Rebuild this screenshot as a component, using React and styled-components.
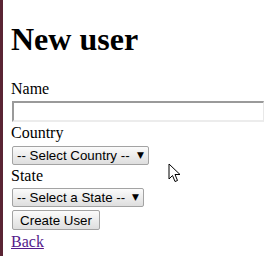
import React from "react";
import styled, { createGlobalStyle } from "styled-components";

const GlobalStyle = createGlobalStyle`
  html {
    height: 100%;
    box-sizing: border-box;
    border-left: 3px solid #5a2434;
    background: #fff;
  }
  body {
    margin: 0 8px 8px;
    font-family: "Liberation Serif", "Times New Roman", serif;
    font-size: 16px;
    color: #000;
  }
`;

const Page = styled.div`
  padding-top: 21.44px;
`;

const Title = styled.h1`
  font-size: 32px;
  font-weight: bold;
  margin: 0 0 21.44px;
`;

const Label = styled.label`
  display: block;
  line-height: 18.4px;
`;

const TextInput = styled.input`
  display: block;
  box-sizing: border-box;
  width: 252px;
  height: 21px;
  margin: 3px 0 2px 1px;
  padding: 1px 2px;
  border-style: solid;
  border-width: 2px 1px 2px 2px;
  border-color: #9a9a9a #e8e8e8 #ececec #9a9a9a;
  background: #fff;
  font: 13.33px "Liberation Sans", Arial, sans-serif;
  outline: none;
`;

const SelectWrap = styled.div`
  position: relative;
  width: ${(p) => p.$width}px;
  margin: 3px 0 2px 1px;
`;

const Select = styled.select`
  appearance: none;
  display: block;
  box-sizing: border-box;
  width: 100%;
  height: 19px;
  padding: 0 12px 0 4px;
  border: 1px solid #a3a3a3;
  border-radius: 2px;
  background: linear-gradient(#fbfbfb, #dedede);
  font: 13.33px "Liberation Sans", Arial, sans-serif;
  color: #000;
  line-height: 17px;
`;

const Arrow = styled.span`
  position: absolute;
  right: 5px;
  top: 4px;
  font: 9px "DejaVu Sans", sans-serif;
  line-height: 10px;
  pointer-events: none;
`;

const Button = styled.button`
  display: block;
  box-sizing: border-box;
  width: 88px;
  height: 20px;
  margin: 3px 0 3px 1px;
  padding: 0 6px;
  border: 1px solid #a3a3a3;
  border-radius: 2px;
  background: linear-gradient(#fbfbfb, #dedede);
  font: 13.33px "Liberation Sans", Arial, sans-serif;
  color: #000;
`;

const BackLink = styled.a`
  color: #551a8b;
  text-decoration: underline;
  line-height: 18.4px;
`;

const Cursor = styled.svg`
  position: fixed;
  left: 168px;
  top: 163px;
`;

const countries = ["-- Select Country --"];
const states = ["-- Select a State --"];

const App = () => {
  return (
    <>
      <GlobalStyle />
      <Page>
        <Title>New user</Title>
        <Label htmlFor="name">Name</Label>
        <TextInput id="name" type="text" />
        <Label htmlFor="country">Country</Label>
        <SelectWrap $width={137}>
          <Select id="country">
            {countries.map((c) => (
              <option key={c}>{c}</option>
            ))}
          </Select>
          <Arrow>▼</Arrow>
        </SelectWrap>
        <Label htmlFor="state">State</Label>
        <SelectWrap $width={132}>
          <Select id="state">
            {states.map((s) => (
              <option key={s}>{s}</option>
            ))}
          </Select>
          <Arrow>▼</Arrow>
        </SelectWrap>
        <Button type="submit">Create User</Button>
        <BackLink href="#">Back</BackLink>
      </Page>
      <Cursor width="13" height="20" viewBox="0 0 13 20">
        <path
          d="M1 1 L1 16 L4.5 12.5 L7 18.5 L9.5 17.5 L7 11.5 L12 11.5 Z"
          fill="#fff"
          stroke="#000"
          strokeWidth="1"
          strokeLinejoin="round"
        />
      </Cursor>
    </>
  );
};

export default App;
